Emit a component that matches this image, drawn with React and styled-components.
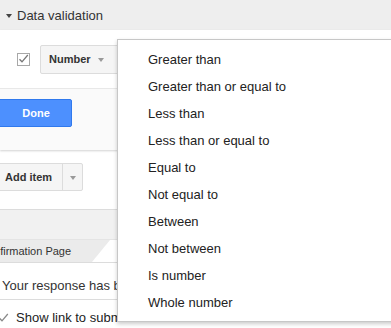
import React from 'react';
import styled, { createGlobalStyle } from 'styled-components';

const GlobalStyle = createGlobalStyle`
  html, body {
    margin: 0;
    padding: 0;
    background: #fff;
  }
  body {
    font-family: "Liberation Sans", Arial, sans-serif;
    color: #222;
  }
`;

const Viewport = styled.div`
  position: relative;
  width: 391px;
  height: 328px;
  overflow: hidden;
  display: flex;
  flex-direction: column;
`;

const Header = styled.div`
  height: 30px;
  flex: none;
  background: #eeeeee;
  display: flex;
  align-items: center;
  padding-left: 6px;
  gap: 5px;
  font-size: 13px;
  color: #333;
`;

const Caret = styled.span`
  width: 0;
  height: 0;
  border-left: 3.5px solid transparent;
  border-right: 3.5px solid transparent;
  border-top: 4px solid ${p => p.$color || '#555'};
  margin-top: 1px;
`;

const Card = styled.div`
  flex: none;
  background: #fff;
  box-shadow: 0 1px 2px rgba(0, 0, 0, 0.18);
  position: relative;
  z-index: 1;
`;

const CardTop = styled.div`
  height: 58px;
  display: flex;
  align-items: center;
  padding-left: 17px;
  gap: 10px;
  border-bottom: 1px solid #e8e8e8;
`;

const CheckBox = styled.span`
  width: 11px;
  height: 11px;
  border: 1px solid #a8a8a8;
  background: #fff;
  display: flex;
  align-items: center;
  justify-content: center;
  flex: none;
`;

const Select = styled.div`
  width: 69px;
  height: 27px;
  border: 1px solid #dcdcdc;
  border-radius: 2px;
  background: #f5f5f5;
  display: flex;
  align-items: center;
  padding-left: 8px;
  gap: 7px;
  font-size: 11px;
  font-weight: bold;
  color: #333;
  box-sizing: content-box;
`;

const CardBottom = styled.div`
  height: 61px;
  background: #fafafa;
  padding-top: 10px;
  box-sizing: border-box;
`;

const DoneButton = styled.div`
  width: 80px;
  height: 28px;
  margin-left: -8px;
  box-sizing: border-box;
  background: #4d90fe;
  border: 1px solid #3079ed;
  border-radius: 2px;
  color: #fff;
  font-size: 11px;
  font-weight: bold;
  display: flex;
  align-items: center;
  justify-content: center;
  padding-left: 8px;
`;

const AddSection = styled.div`
  height: 60px;
  flex: none;
  padding-top: 13px;
  box-sizing: border-box;
  border-bottom: 1px solid #dcdcdc;
`;

const SplitButton = styled.div`
  display: flex;
  height: 28px;
  margin-left: -8px;
  width: 91px;
  box-sizing: border-box;
  border: 1px solid #dcdcdc;
  border-radius: 2px;
  background: #f5f5f5;
  font-size: 11px;
  font-weight: bold;
  color: #333;
`;

const SplitMain = styled.div`
  width: 70px;
  display: flex;
  align-items: center;
  padding-left: 12px;
  border-right: 1px solid #dcdcdc;
  box-sizing: border-box;
`;

const SplitArrow = styled.div`
  flex: 1;
  display: flex;
  align-items: center;
  justify-content: center;
`;

const GrayBand = styled.div`
  height: 29px;
  flex: none;
  background: #f1f1f1;
`;

const TabRow = styled.div`
  flex: none;
  display: flex;
  border-top: 1px solid #e4e4e4;
  border-bottom: 1px solid #dcdcdc;
  box-sizing: border-box;
  height: 24px;
`;

const Tab = styled.div`
  margin-left: -20px;
  padding-right: 26px;
  display: flex;
  align-items: center;
  font-size: 11px;
  color: #333;
  background: #ebebeb;
  clip-path: polygon(0 0, 100% 0, calc(100% - 18px) 100%, 0 100%);
  width: 130px;
  box-sizing: border-box;
  white-space: nowrap;
`;

const ResponseBox = styled.div`
  margin-top: 9px;
  height: 27px;
  flex: none;
  border-bottom: 1px solid #dcdcdc;
  display: flex;
  align-items: center;
  padding-left: 2px;
  font-size: 13px;
  color: #333;
  white-space: nowrap;
`;

const CheckRow = styled.div`
  margin-top: 10px;
  width: 120px;
  overflow: hidden;
  display: flex;
  align-items: center;
  gap: 7px;
  font-size: 13px;
  color: #222;
  margin-left: -2px;
  white-space: nowrap;
`;

const Menu = styled.ul`
  position: absolute;
  left: 117px;
  top: 39px;
  width: 300px;
  height: 283px;
  margin: 0;
  padding: 6px 0;
  box-sizing: border-box;
  list-style: none;
  background: #fff;
  border: 1px solid rgba(0, 0, 0, 0.22);
  box-shadow: 0 2px 4px rgba(0, 0, 0, 0.2);
  z-index: 5;
`;

const MenuItem = styled.li`
  height: 27px;
  display: flex;
  align-items: center;
  padding-left: 30px;
  font-size: 13px;
  color: #222;
  white-space: nowrap;
`;

const Tick = ({ color = '#777' }) => (
  <svg width="11" height="10" viewBox="0 0 11 10" style={{ flex: 'none' }}>
    <path d="M1.5 5.2 L4 7.8 L9.8 1" fill="none" stroke={color} strokeWidth="1.3" />
  </svg>
);

const options = [
  'Greater than',
  'Greater than or equal to',
  'Less than',
  'Less than or equal to',
  'Equal to',
  'Not equal to',
  'Between',
  'Not between',
  'Is number',
  'Whole number',
];

export default function App() {
  return (
    <>
      <GlobalStyle />
      <Viewport>
        <Header>
          <Caret $color="#444" />
          Data validation
        </Header>
        <Card>
          <CardTop>
            <CheckBox>
              <Tick />
            </CheckBox>
            <Select>
              Number
              <Caret $color="#999" />
            </Select>
          </CardTop>
          <CardBottom>
            <DoneButton>Done</DoneButton>
          </CardBottom>
        </Card>
        <AddSection>
          <SplitButton>
            <SplitMain>Add item</SplitMain>
            <SplitArrow>
              <Caret $color="#999" />
            </SplitArrow>
          </SplitButton>
        </AddSection>
        <GrayBand />
        <TabRow>
          <Tab>Confirmation Page</Tab>
        </TabRow>
        <ResponseBox>Your response has been recorded.</ResponseBox>
        <CheckRow>
          <Tick color="#888" />
          Show link to submit another response
        </CheckRow>
        <Menu>
          {options.map(o => (
            <MenuItem key={o}>{o}</MenuItem>
          ))}
        </Menu>
      </Viewport>
    </>
  );
}
